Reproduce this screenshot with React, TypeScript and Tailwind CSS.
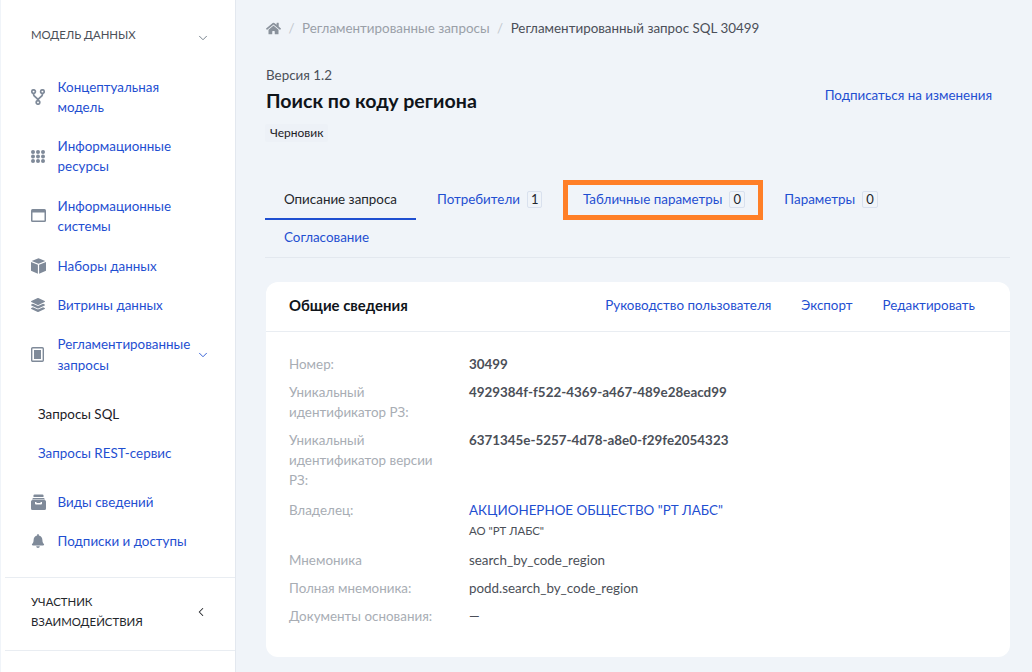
import { ChevronDown, ChevronLeft } from 'lucide-react'
import { FaHome, FaLayerGroup, FaBell } from 'react-icons/fa'

const font = "font-['Lato','Noto_Sans',sans-serif]"

function ModelIcon() {
  return (
    <svg width="14" height="16" viewBox="0 0 14 16" fill="none" stroke="#7f8a99" strokeWidth="1.7">
      <circle cx="2.6" cy="2.6" r="1.8" />
      <circle cx="11.4" cy="2.6" r="1.8" />
      <circle cx="7" cy="13.4" r="1.8" />
      <path d="M2.6 4.4v1.4c0 2.2 4.4 2.2 4.4 5.8M11.4 4.4v1.4c0 2.2-4.4 2.2-4.4 5.8" />
    </svg>
  )
}

function GridIcon() {
  return (
    <svg width="14" height="13" viewBox="0 0 14 13" fill="#7f8a99">
      {[2, 6.5, 11].flatMap((y) =>
        [2, 7, 12].map((x) => <circle key={`${x}-${y}`} cx={x} cy={y} r="2" />),
      )}
    </svg>
  )
}

function WindowIcon() {
  return (
    <svg width="15" height="13" viewBox="0 0 15 13" fill="none">
      <rect x="0" y="0" width="15" height="13" rx="1.5" fill="#7f8a99" />
      <rect x="1.5" y="3.5" width="12" height="8" fill="#fff" />
    </svg>
  )
}

function CubeIcon() {
  return (
    <svg width="15" height="16" viewBox="0 0 15 16" fill="#7f8a99">
      <path d="M7.500 0.300 14.300 2.900 7.500 5.700 0.700 2.900z" />
      <path d="M0 4 6.900 6.800V15.800L0 12.800z" />
      <path d="M15 4 8.100 6.800V15.800L15 12.800z" />
    </svg>
  )
}

function BookIcon() {
  return (
    <svg width="13" height="15" viewBox="0 0 13 15" fill="none">
      <rect x="0.7" y="0.7" width="11.6" height="13.6" rx="1" stroke="#7f8a99" strokeWidth="1.4" />
      <rect x="3" y="3" width="7" height="9" fill="#7f8a99" />
    </svg>
  )
}

function ArchiveIcon() {
  return (
    <svg width="15" height="16" viewBox="0 0 15 16" fill="#7f8a99">
      <path d="M3.5 0.5h8a1 1 0 0 1 1 1V3h-10V1.500a1 1 0 0 1 1-1z" />
      <path d="M2 4h11l1 1.500H1z" />
      <path d="M1.500 6h12A1.500 1.500 0 0 1 15 7.500v7a1.500 1.500 0 0 1-1.500 1.500h-12A1.500 1.500 0 0 1 0 14.500v-7A1.500 1.500 0 0 1 1.500 6zM4 8v1.500a1 1 0 0 0 1 1h5a1 1 0 0 0 1-1V8H9.500v1h-4V8z" fillRule="evenodd" />
    </svg>
  )
}

const twoLineItems = [
  { icon: <ModelIcon />, label: ['Концептуальная', 'модель'] },
  { icon: <GridIcon />, label: ['Информационные', 'ресурсы'] },
  { icon: <WindowIcon />, label: ['Информационные', 'системы'] },
]

const oneLineItems = [
  { icon: <CubeIcon />, label: ['Наборы данных'] },
  { icon: <FaLayerGroup size={14} color="#7f8a99" />, label: ['Витрины данных'] },
]

const bottomItems = [
  { icon: <ArchiveIcon />, label: 'Виды сведений' },
  { icon: <FaBell size={14} color="#7f8a99" />, label: 'Подписки и доступы' },
]

const details = [
  { label: 'Уникальный идентификатор РЗ:', value: '4929384f-f522-4369-a467-489e28eacd99' },
  { label: 'Уникальный идентификатор версии РЗ:', value: '6371345e-5257-4d78-a8e0-f29fe2054323' },
]

function NavItem({ icon, label }: { icon: React.ReactNode; label: string[] }) {
  return (
    <div className={`flex items-center ${label.length > 1 ? 'py-[9.6px]' : 'py-[9.5px]'}`}>
      <div className="flex w-[26.6px] shrink-0 items-center">{icon}</div>
      <div className="text-[13.4px] leading-[20px] text-[#1f4fd1]">
        {label.map((l) => (
          <div key={l}>{l}</div>
        ))}
      </div>
    </div>
  )
}

function Sidebar() {
  return (
    <aside className="ml-[1px] h-[672px] w-[235px] shrink-0 overflow-hidden border-r border-[#e3e8ef] bg-white">
      <div className="flex items-start justify-between pl-[30px] pr-[25px] pt-[28px]">
        <span className="text-[11.4px] leading-[14px] text-[#4b4f58]">МОДЕЛЬ ДАННЫХ</span>
        <ChevronDown size={14} strokeWidth={1.5} color="#66727f" className="mt-[3px]" />
      </div>
      <div className="pl-[30px] pr-[25px] pt-[22.7px]">
        {twoLineItems.map((item) => (
          <NavItem key={item.label[0]} {...item} />
        ))}
        <div className="pt-[1.2px]">
          {oneLineItems.map((item) => (
            <NavItem key={item.label[0]} {...item} />
          ))}
        </div>
        <div className="mt-[0.4px] flex items-center py-[9px]">
          <div className="flex w-[26.6px] shrink-0 items-center">
            <BookIcon />
          </div>
          <div className="flex-1 text-[13.4px] leading-[21px] text-[#1f4fd1]">
            <div>Регламентированные</div>
            <div>запросы</div>
          </div>
          <ChevronDown size={14} strokeWidth={1.5} color="#1f4fd1" />
        </div>
        <div className="pl-[7px] pt-[10px] text-[13.4px] leading-[20px]">
          <div className="py-[9.5px] text-[#1c2026]">Запросы SQL</div>
          <div className="py-[9.5px] text-[#1f4fd1]">Запросы REST-сервис</div>
        </div>
        <div className="pt-[10px]">
          {bottomItems.map((item) => (
            <NavItem key={item.label} icon={item.icon} label={[item.label]} />
          ))}
        </div>
      </div>
      <div className="ml-[4px] mt-[16px] border-y border-[#e9edf2] pb-[17.5px] pl-[26px] pr-[27px] pt-[14.5px]">
        <div className="flex items-center justify-between">
          <div className="text-[11.4px] leading-[20px] text-[#23262b]">
            <div>УЧАСТНИК</div>
            <div>ВЗАИМОДЕЙСТВИЯ</div>
          </div>
          <ChevronLeft size={14} strokeWidth={1.8} color="#23262b" />
        </div>
      </div>
    </aside>
  )
}

function Row({ label, children, className }: { label: string; children: React.ReactNode; className?: string }) {
  return (
    <div className={`flex text-[13.4px] leading-[20px] ${className ?? ''}`}>
      <div className="w-[180px] shrink-0 pr-[20px] text-[#a8adb4]">{label}</div>
      <div className="text-[#4b4f58]">{children}</div>
    </div>
  )
}

function Count({ children }: { children: React.ReactNode }) {
  return (
    <span className="rounded-[2px] border border-[#d9e1ee] px-[3px] text-[13px] leading-[15px] text-[#23262b]">{children}</span>
  )
}

export default function App() {
  return (
    <div className={`flex h-[672px] w-[1032px] overflow-hidden bg-[#f0f4f9] ${font}`}>
      <Sidebar />
      <main className="flex-1 pl-[30px] pr-[22px]">
        <nav className="flex items-center pt-[18px] text-[13.4px] leading-[20px]">
          <FaHome size={15} color="#8a929c" />
          <span className="mx-[7.5px] text-[#c3c8ce]">/</span>
          <span className="text-[#9aa0a8]">Регламентированные запросы</span>
          <span className="mx-[7.5px] text-[#c3c8ce]">/</span>
          <span className="text-[#4b4f58]">Регламентированный запрос SQL 30499</span>
        </nav>

        <div className="flex items-start justify-between pr-[18px] pt-[27px]">
          <div>
            <div className="text-[13.4px] leading-[20px] text-[#4b4f58]">Версия 1.2</div>
            <h1 className="mt-[4px] text-[19.6px] font-bold leading-[24px] text-[#0f141a]">Поиск по коду региона</h1>
          </div>
          <a className="mt-[20px] text-[13.4px] leading-[20px] text-[#1f4fd1]">Подписаться на изменения</a>
        </div>
        <span className="-ml-[1px] mt-[11px] inline-block rounded-[2px] bg-[#edf1f7] px-[5px] text-[12px] leading-[18px] text-[#1c2026]">
          Черновик
        </span>

        <div className="-ml-[1px] mt-[37px] flex flex-wrap border-b border-[#e3e8ef] text-[13.4px] leading-[20px]">
          <div className="border-b-2 border-[#1f4fd1] px-[19px] pb-[9px] pt-[9px] text-[#23262b]">Описание запроса</div>
          <div className="flex items-center gap-[7px] pb-[11px] pl-[21px] pr-[20.4px] pt-[9px] text-[#1f4fd1]">
            Потребители
            <Count>1</Count>
          </div>
          <div className="flex items-center gap-[7px] border-[5px] border-[#ff7f27] pb-[6px] pl-[15px] pr-[13.4px] pt-[4px] text-[#1f4fd1]">
            Табличные параметры
            <Count>0</Count>
          </div>
          <div className="flex items-center gap-[7px] px-[21px] pb-[11px] pt-[9px] text-[#1f4fd1]">
            Параметры
            <Count>0</Count>
          </div>
          <div className="w-full px-[19px] pb-[10px] pt-[7px] text-[#1f4fd1]">Согласование</div>
        </div>

        <section className="mt-[24px] h-[375px] rounded-[12px] bg-white">
          <div className="flex h-[50px] items-center justify-between border-b border-[#e9edf2] pb-[2px] pl-[23px] pr-[35px]">
            <h2 className="text-[14.9px] font-bold text-[#0f141a]">Общие сведения</h2>
            <div className="flex gap-[30px] text-[13.4px] text-[#1f4fd1]">
              <a>Руководство пользователя</a>
              <a>Экспорт</a>
              <a>Редактировать</a>
            </div>
          </div>
          <div className="flex flex-col gap-[8px] pl-[23px] pt-[22px]">
            <Row label="Номер:">
              <b>30499</b>
            </Row>
            {details.map((d) => (
              <Row key={d.value} label={d.label}>
                <b>{d.value}</b>
              </Row>
            ))}
            <Row label="Владелец:" className="pb-[1px] pt-[2px]">
              <div className="text-[#1f4fd1]">АКЦИОНЕРНОЕ ОБЩЕСТВО "РТ ЛАБС"</div>
              <div className="text-[11.4px] leading-[21px]">АО "РТ ЛАБС"</div>
            </Row>
            <Row label="Мнемоника">search_by_code_region</Row>
            <Row label="Полная мнемоника:">podd.search_by_code_region</Row>
            <Row label="Документы основания:">—</Row>
          </div>
        </section>
      </main>
    </div>
  )
}
